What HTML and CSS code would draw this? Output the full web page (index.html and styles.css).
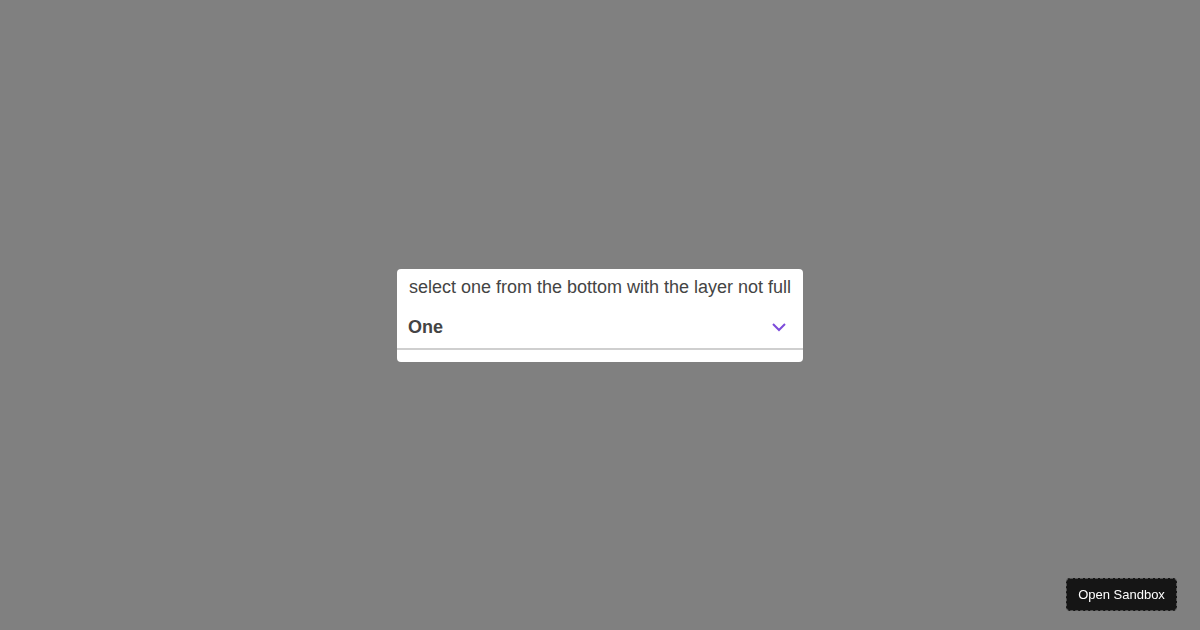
FILE: index.html
```html
<!DOCTYPE html>
<html>
<head>
<meta charset="utf-8">
<link rel="stylesheet" href="styles.css">
</head>
<body>
<div class="layer">
  <div class="panel">
    <label class="label">select one from the bottom with the layer not full</label>
    <div class="field">
      <div class="select">
        <span class="value">One</span>
        <svg class="chev" width="24" height="24" viewBox="0 0 24 24"><path d="M18 9l-6 6-6-6" fill="none" stroke="#7D4CDB" stroke-width="2"/></svg>
      </div>
    </div>
  </div>
</div>
<a class="sandbox">Open Sandbox</a>
</body>
</html>
```
FILE: styles.css
```css
html, body { margin: 0; padding: 0; height: 100%; }
body { background: #808080; font-family: "Liberation Sans", Arial, sans-serif; }
.layer { height: 630px; display: flex; align-items: center; justify-content: center; }
.panel {
  background: #fff; border-radius: 4px;
  box-sizing: border-box; padding: 6px 0 12px 0;
  display: flex; flex-direction: column;
}
.label { font-size: 18px; line-height: 24px; color: #444; padding: 0 12px; margin-bottom: 5px; white-space: nowrap; }
.field { border-bottom: 2px solid #cfcfcf; }
.select { display: flex; align-items: center; justify-content: space-between; padding: 11px 12px 9px 11px; }
.value { font-size: 18px; line-height: 24px; font-weight: bold; color: #444; }
.chev { display: block; }
.sandbox {
  position: fixed; right: 23px; bottom: 19px;
  width: 111px; height: 33px; box-sizing: border-box;
  display: flex; align-items: center; justify-content: center;
  background: #151515; color: #fff; font-size: 13px;
  border: 1px dashed #555; border-radius: 4px;
}
```
